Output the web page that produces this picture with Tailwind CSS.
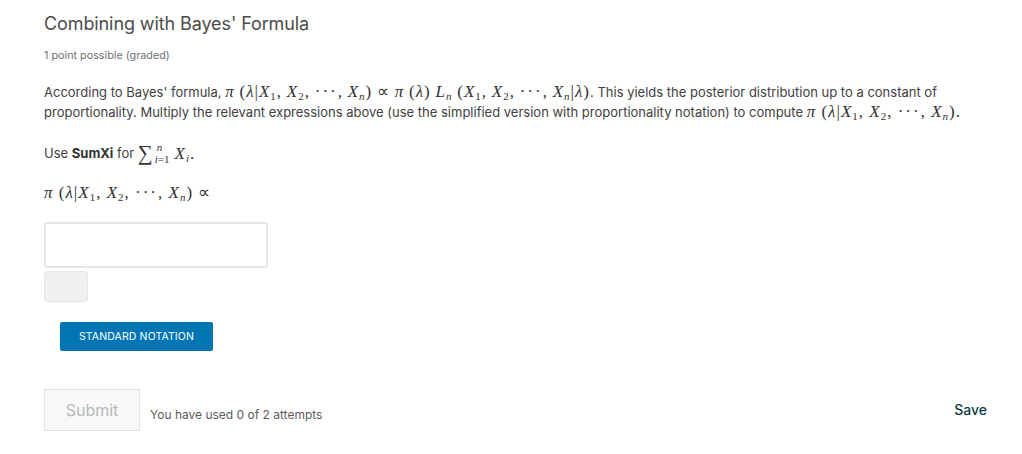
<!DOCTYPE html>
<html lang="en">
<head>
<meta charset="utf-8">
<title>Combining with Bayes' Formula</title>
<script src="https://cdn.jsdelivr.net/npm/@tailwindcss/browser@4"></script>
</head>
<body class="bg-white font-['Inter',sans-serif] text-[#414141] overflow-hidden">
<main class="w-[1022px] h-[454px] pl-[44px] pr-[35px] pt-[13px]">
    <h3 class="text-[18px] leading-[22px] tracking-[-0.1px] text-[#4b4b4b]">Combining with Bayes' Formula</h3>
    <div class="mt-[14px] text-[10.8px] leading-[14px] text-[#707070]">1 point possible (graded)</div>

    <p class="mt-[19px] text-[13px] leading-[20px] whitespace-nowrap">According to Bayes' formula, <span class="font-['Liberation_Serif',serif] text-[17px] leading-none tracking-[1px] [word-spacing:-0.5px] text-[#333]"><i>π</i> (<i>λ</i>|<i>X</i><sub class="text-[11px] bottom-[-3px]">1</sub>, <i>X</i><sub class="text-[11px] bottom-[-3px]">2</sub>, <span class="tracking-[2px]">···</span>, <i>X</i><sub class="text-[11px] bottom-[-3px]"><i>n</i></sub>) ∝ <i>π</i> (<i>λ</i>) <i>L</i><sub class="text-[11px] bottom-[-3px]"><i>n</i></sub> (<i>X</i><sub class="text-[11px] bottom-[-3px]">1</sub>, <i>X</i><sub class="text-[11px] bottom-[-3px]">2</sub>, <span class="tracking-[2px]">···</span>, <i>X</i><sub class="text-[11px] bottom-[-3px]"><i>n</i></sub>|<i>λ</i>)</span>. This yields the posterior distribution up to a constant of<br>proportionality. Multiply the relevant expressions above (use the simplified version with proportionality notation) to compute <span class="font-['Liberation_Serif',serif] text-[17px] leading-none tracking-[1px] text-[#333]"><i>π</i> (<i>λ</i>|<i>X</i><sub class="text-[11px] bottom-[-3px]">1</sub>, <i>X</i><sub class="text-[11px] bottom-[-3px]">2</sub>, <span class="tracking-[2px]">···</span>, <i>X</i><sub class="text-[11px] bottom-[-3px]"><i>n</i></sub>).</span></p>

    <p class="mt-[21px] text-[13px] leading-[20px] whitespace-nowrap flex items-center h-[20px]">
        <span class="whitespace-pre">Use <b class="font-bold text-[#313131]">SumXi</b> for </span>
        <span class="font-['Liberation_Serif',serif] flex items-center text-[#333]">
            <span class="text-[21px] leading-none">∑</span>
            <span class="flex flex-col text-[11px] leading-[12px] ml-[2px]"><i class="ml-[2px]">n</i><span><i>i</i>=1</span></span>
            <span class="text-[17px] leading-none tracking-[1px] ml-[5px]"><i>X</i><sub class="text-[11px] bottom-[-3px]"><i>i</i></sub>.</span>
        </span>
    </p>

    <p class="mt-[20px] text-[17px] leading-[20px] tracking-[1px] text-[#333] font-['Liberation_Serif',serif] whitespace-nowrap"><i>π</i> (<i>λ</i>|<i>X</i><sub class="text-[11px] bottom-[-3px]">1</sub>, <i>X</i><sub class="text-[11px] bottom-[-3px]">2</sub>, <span class="tracking-[2px]">···</span>, <i>X</i><sub class="text-[11px] bottom-[-3px]"><i>n</i></sub>) ∝</p>

    <input type="text" class="block mt-[19px] w-[224px] h-[46px] bg-white border-2 border-[#e6e6e6] rounded-[3px]">
    <div class="mt-[3px] w-[44px] h-[31px] bg-[#f0f0f0] border border-[#e4e4e4] rounded-[4px]"></div>

    <button class="block mt-[20px] ml-[16px] w-[153px] h-[29px] bg-[#0075b4] rounded-[2px] text-white text-[10.5px] tracking-[0.12px]">STANDARD NOTATION</button>

    <div class="mt-[38px] flex items-end">
        <button class="w-[96px] h-[42px] bg-[#f8f8f8] border border-[#e2e2e2] text-[#b9b9b9] text-[16px]">Submit</button>
        <span class="ml-[10px] mb-[8px] text-[12px] leading-[16px] text-[#5c5c5c]">You have used 0 of 2 attempts</span>
        <button class="ml-auto mb-[13px] text-[14px] leading-[16px] font-medium text-[#0a3b47]">Save</button>
    </div>
</main>
</body>
</html>
